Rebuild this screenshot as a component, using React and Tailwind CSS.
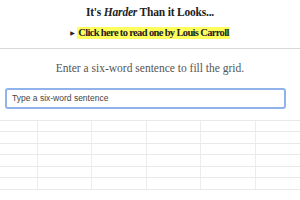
import React from 'react';

const serif = { fontFamily: '"Liberation Serif", "DejaVu Serif", serif' };

const Grid = () => {
  const rows = Array.from({ length: 6 });
  const cols = Array.from({ length: 6 });
  return (
    <div className="overflow-hidden w-full">
      <div className="ml-[-17px] w-[327px] border-t border-[#e9e9e9]">
        {rows.map((_, r) => (
          <div key={r} className="flex h-[11.5px] border-b border-[#e9e9e9]">
            {cols.map((_, c) => (
              <div key={c} className="flex-1 border-r border-[#ececec]" />
            ))}
          </div>
        ))}
      </div>
    </div>
  );
}

export default function App() {
  return (
    <div className="w-[300px] h-[200px] bg-white overflow-hidden">
      <div className="h-[49px] border-b border-[#d8d8d8] flex flex-col items-center pt-[3px]" style={serif}>
        <h1 className="text-[11.5px] font-bold text-[#222] leading-[18px] tracking-[-0.2px]">
          It's <em>Harder</em> Than it Looks...
        </h1>
        <div className="mt-[6px] flex items-center text-[10.5px] font-bold text-[#222] leading-[12px] tracking-[-0.65px]">
          <span className="text-[6px] mr-[3px]">▶</span>
          <span className="bg-[#ffff5c] px-[1px]">Click here to read one by Louis Carroll</span>
        </div>
      </div>
      <div className="pt-[10px] text-center text-[11.5px] text-[#555] leading-[18px]" style={serif}>
        Enter a six-word sentence to fill the grid.
      </div>
      <div className="px-[5px] pt-[6px] pr-[14px]">
        <input
          readOnly
          placeholder="Type a six-word sentence"
          className="w-full h-[21px] rounded-[3px] border-2 border-[#8fb3ea] px-[5px] text-[8.5px] text-[#444] placeholder-[#444] outline-none"
          style={{ fontFamily: '"Liberation Sans", Arial, sans-serif' }}
        />
      </div>
      <div className="pt-[11px]">
        <Grid />
      </div>
    </div>
  );
}
